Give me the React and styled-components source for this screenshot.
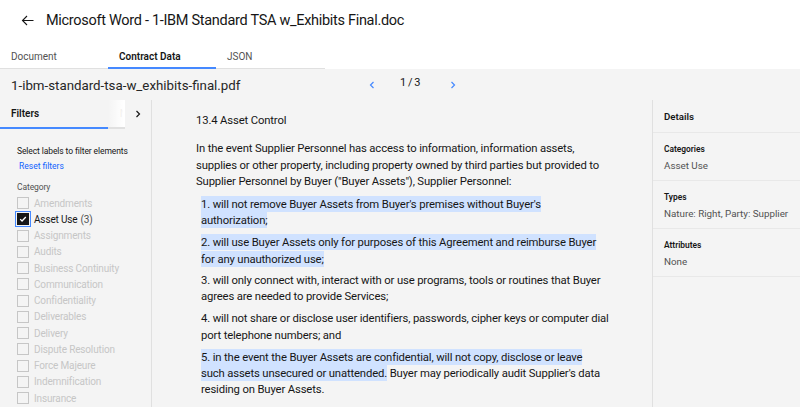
import React from 'react'
import styled, { createGlobalStyle } from 'styled-components'

const Global = createGlobalStyle`
  html, body { margin: 0; padding: 0; }
  body {
    background: #f4f4f4;
    font-family: Roboto, "Liberation Sans", sans-serif;
    color: #161616;
  }
`

const Page = styled.div`
  width: 800px;
  height: 407px;
  overflow: hidden;
  display: flex;
  flex-direction: column;
`

const Header = styled.header`
  background: #fff;
`

const TitleRow = styled.div`
  height: 40px;
  display: flex;
  align-items: center;
  padding-left: 21px;
  gap: 12px;
`

const BackButton = styled.button`
  border: 0;
  background: none;
  padding: 0;
  width: 13px;
  height: 13px;
  display: flex;
  color: #161616;
`

const Title = styled.h1`
  margin: 0;
  font-size: 14.5px;
  letter-spacing: -0.3px;
  font-weight: 400;
  color: #161616;
`

const TabRow = styled.nav`
  display: flex;
  width: 325px;
  height: 28px;
  border-bottom: 1px solid #e0e0e0;
`

const Tab = styled.div`
  width: 108px;
  box-sizing: border-box;
  padding: 5px 11px 0;
  display: flex;
  align-items: center;
  font-size: 10px;
  font-weight: ${p => (p.$active ? 600 : 400)};
  color: ${p => (p.$active ? '#161616' : '#525252')};
  border-bottom: 2px solid ${p => (p.$active ? '#4589ff' : 'transparent')};
  margin-bottom: -1px;
`

const FileBar = styled.div`
  height: 31px;
  display: grid;
  grid-template-columns: 357px auto 1fr;
  align-items: center;
  padding-left: 11px;
  box-sizing: border-box;
`

const FileName = styled.div`
  font-size: 13.3px;
  color: #262626;
  margin-top: 2px;
`

const Pager = styled.div`
  display: flex;
  align-items: center;
  font-size: 11px;
  color: #161616;
`

const PageNum = styled.span`
  margin: -5px 29px 0 24px;
  word-spacing: -1px;
`

const Chevron = styled.svg`
  width: 8px;
  height: 8px;
  color: ${p => p.$color || '#4589ff'};
`

const Workspace = styled.div`
  flex: 1;
  display: grid;
  grid-template-columns: 152px 1fr 148px;
  min-height: 0;
`

const FilterPanel = styled.aside`
  border-right: 1px solid #e0e0e0;
  overflow: hidden;
`

const PanelTabs = styled.div`
  display: flex;
  height: 29px;
`

const PanelTab = styled.div`
  width: 108px;
  flex: 0 0 108px;
  box-sizing: border-box;
  padding: 0 11px;
  display: flex;
  align-items: center;
  font-size: 10px;
  font-weight: 600;
  border-bottom: 2px solid #4589ff;
`

const HiddenTab = styled.div`
  width: 17px;
  flex: 0 0 17px;
  box-sizing: border-box;
  display: flex;
  align-items: center;
  padding-left: 12px;
  font-size: 10px;
  color: #8d8d8d;
  border-bottom: 2px solid #e0e0e0;
  overflow: hidden;
  position: relative;
  &::after {
    content: '';
    position: absolute;
    inset: 0 0 -2px 0;
    background: linear-gradient(90deg, rgba(244, 244, 244, 0), #fff 90%);
  }
`

const ScrollButton = styled.div`
  flex: 1;
  display: flex;
  align-items: center;
  justify-content: center;
  padding-bottom: 2px;
`

const FilterBody = styled.div`
  padding: 15.5px 0 0 17px;
`

const Hint = styled.p`
  margin: 0;
  font-size: 8.5px;
  letter-spacing: -0.1px;
  line-height: 13px;
  color: #161616;
`

const LinkButton = styled.button`
  display: block;
  border: 0;
  background: none;
  padding: 0;
  margin: 2px 0 0 2px;
  font: inherit;
  font-size: 8.5px;
  line-height: 13px;
  color: #0f62fe;
`

const GroupLabel = styled.div`
  margin-top: 7.5px;
  font-size: 8.5px;
  letter-spacing: -0.1px;
  line-height: 14px;
  color: #525252;
`

const CheckList = styled.ul`
  list-style: none;
  margin: 1px 0 0;
  padding: 0;
`

const CheckRow = styled.li`
  height: 16.25px;
  display: flex;
  align-items: center;
  gap: 5px;
  font-size: 10px;
  letter-spacing: -0.15px;
  white-space: nowrap;
  color: ${p => (p.$disabled ? '#c6c6c6' : '#161616')};
`

const Box = styled.span`
  flex: 0 0 12px;
  height: 12px;
  box-sizing: border-box;
  border: 1px solid ${p => (p.$checked ? '#161616' : '#c6c6c6')};
  background: ${p => (p.$checked ? '#161616' : 'transparent')};
  outline: ${p => (p.$checked ? '1.5px solid #4589ff' : 'none')};
  outline-offset: 1px;
  display: flex;
  align-items: center;
  justify-content: center;
`

const Count = styled.span`
  color: #525252;
  margin-left: 3px;
`

const Content = styled.main`
  padding: 13px 0 0 44px;
  overflow: hidden;
`

const Doc = styled.article`
  font-size: 11.3px;
  letter-spacing: -0.15px;
  line-height: 16.25px;
  color: #161616;
  white-space: nowrap;
`

const Heading = styled.h2`
  margin: 0 0 12px;
  font-size: inherit;
  font-weight: 400;
  line-height: 16.25px;
`

const Para = styled.p`
  margin: 0 0 6.5px;
`

const Item = styled.p`
  margin: 0 0 5.75px 5px;
`

const Mark = styled.span`
  background: #d0e2ff;
  padding: 1.5px 0;
`

const DetailsPanel = styled.aside`
  border-left: 1px solid #e0e0e0;
`

const DetailsHead = styled.div`
  height: 32px;
  display: flex;
  align-items: center;
  padding: 0 11px;
  font-size: 9.7px;
  font-weight: 600;
  border-bottom: 1px solid #e8e8e8;
`

const Section = styled.section`
  padding: 8.5px 11px 6.5px;
  border-bottom: 1px solid #e8e8e8;
`

const SectionTitle = styled.div`
  font-size: 8.4px;
  font-weight: 600;
  line-height: 14px;
`

const SectionValue = styled.div`
  margin-top: 2px;
  font-size: 9.8px;
  line-height: 16px;
  color: #525252;
  white-space: nowrap;
`

const ChevronIcon = ({ dir, color }) => (
  <Chevron viewBox="0 0 8 8" $color={color}>
    <polyline
      points={dir === 'left' ? '5.5,1 2.5,4 5.5,7' : '2.5,1 5.5,4 2.5,7'}
      fill="none"
      stroke="currentColor"
      strokeWidth="1.2"
    />
  </Chevron>
)

const categories = [
  { label: 'Amendments' },
  { label: 'Asset Use', count: 3, checked: true },
  { label: 'Assignments' },
  { label: 'Audits' },
  { label: 'Business Continuity' },
  { label: 'Communication' },
  { label: 'Confidentiality' },
  { label: 'Deliverables' },
  { label: 'Delivery' },
  { label: 'Dispute Resolution' },
  { label: 'Force Majeure' },
  { label: 'Indemnification' },
  { label: 'Insurance' },
]

const details = [
  { title: 'Categories', value: 'Asset Use' },
  { title: 'Types', value: 'Nature: Right, Party: Supplier' },
  { title: 'Attributes', value: 'None' },
]

export default function App() {
  return (
    <Page>
      <Global />
      <Header>
        <TitleRow>
          <BackButton aria-label="Back">
            <svg viewBox="0 0 13 13" width="13" height="13">
              <path d="M1.5 6.5h11M6 2L1.5 6.5 6 11" fill="none" stroke="currentColor" strokeWidth="1.1" />
            </svg>
          </BackButton>
          <Title>Microsoft Word - 1-IBM Standard TSA w_Exhibits Final.doc</Title>
        </TitleRow>
        <TabRow>
          <Tab>Document</Tab>
          <Tab $active>Contract Data</Tab>
          <Tab>JSON</Tab>
        </TabRow>
      </Header>

      <FileBar>
        <FileName>1-ibm-standard-tsa-w_exhibits-final.pdf</FileName>
        <Pager>
          <ChevronIcon dir="left" />
          <PageNum>1 / 3</PageNum>
          <ChevronIcon dir="right" />
        </Pager>
      </FileBar>

      <Workspace>
        <FilterPanel>
          <PanelTabs>
            <PanelTab>Filters</PanelTab>
            <HiddenTab>N</HiddenTab>
            <ScrollButton>
              <ChevronIcon dir="right" color="#161616" />
            </ScrollButton>
          </PanelTabs>
          <FilterBody>
            <Hint>Select labels to filter elements</Hint>
            <LinkButton>Reset filters</LinkButton>
            <GroupLabel>Category</GroupLabel>
            <CheckList>
              {categories.map(c => (
                <CheckRow key={c.label} $disabled={!c.checked}>
                  <Box $checked={c.checked}>
                    {c.checked && (
                      <svg viewBox="0 0 10 10" width="8" height="8">
                        <path d="M1.5 5.2l2.3 2.3 4.7-5" fill="none" stroke="#fff" strokeWidth="1.6" />
                      </svg>
                    )}
                  </Box>
                  <span>
                    {c.label}
                    {c.count && <Count>({c.count})</Count>}
                  </span>
                </CheckRow>
              ))}
            </CheckList>
          </FilterBody>
        </FilterPanel>

        <Content>
          <Doc>
            <Heading>13.4 Asset Control</Heading>
            <Para>
              In the event Supplier Personnel has access to information, information assets,<br />
              supplies or other property, including property owned by third parties but provided to<br />
              Supplier Personnel by Buyer ("Buyer Assets"), Supplier Personnel:
            </Para>
            <Item>
              <Mark>1. will not remove Buyer Assets from Buyer's premises without Buyer's<br />authorization;</Mark>
            </Item>
            <Item>
              <Mark>2. will use Buyer Assets only for purposes of this Agreement and reimburse Buyer<br />for any unauthorized use;</Mark>
            </Item>
            <Item>
              3. will only connect with, interact with or use programs, tools or routines that Buyer<br />
              agrees are needed to provide Services;
            </Item>
            <Item>
              4. will not share or disclose user identifiers, passwords, cipher keys or computer dial<br />
              port telephone numbers; and
            </Item>
            <Item>
              <Mark>
                5. in the event the Buyer Assets are confidential, will not copy, disclose or leave<br />
                such assets unsecured or unattended.
              </Mark>{' '}
              Buyer may periodically audit Supplier's data<br />
              residing on Buyer Assets.
            </Item>
          </Doc>
        </Content>

        <DetailsPanel>
          <DetailsHead>Details</DetailsHead>
          {details.map(d => (
            <Section key={d.title}>
              <SectionTitle>{d.title}</SectionTitle>
              <SectionValue>{d.value}</SectionValue>
            </Section>
          ))}
        </DetailsPanel>
      </Workspace>
    </Page>
  )
}
